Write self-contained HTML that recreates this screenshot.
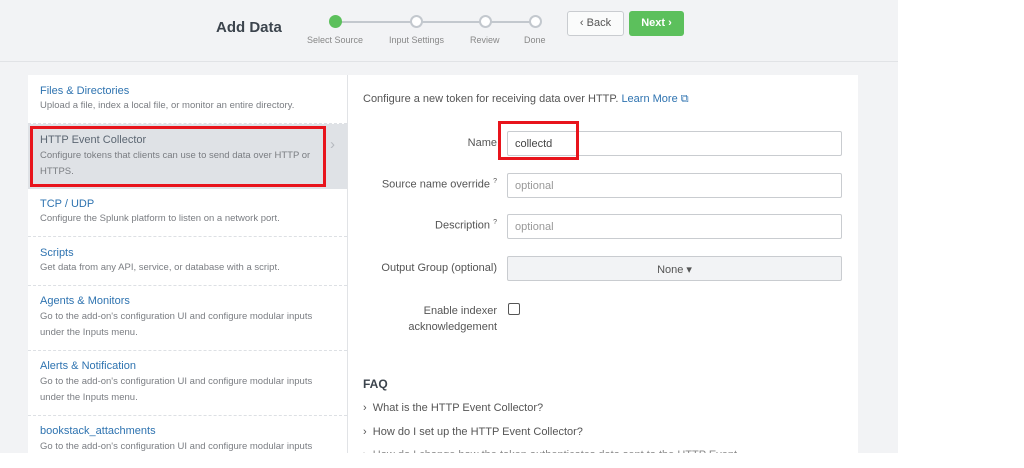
<!DOCTYPE html><html><head><style>
*{margin:0;padding:0;box-sizing:border-box}
body{width:1024px;height:468px;background:#fff;font-family:"Liberation Sans",sans-serif;position:relative;overflow:hidden}
.a{position:absolute;white-space:nowrap}
.t{color:#2e73b0;font-size:11px}
.d{color:#7a7d82;font-size:9.5px;line-height:16px}
.sep{position:absolute;left:28px;width:319px;border-top:1px dashed #dde0e4}
.lbl{position:absolute;right:527px;color:#555;font-size:11px;text-align:right}
.inp{position:absolute;left:507px;width:335px;height:25px;border:1px solid #c9ccd0;border-radius:2px;background:#fff;font-size:11px;color:#999;padding:6px 7px}
.stp{position:absolute;top:15px;width:13px;height:13px;border-radius:50%;border:2px solid #c3c8ce;background:#fff}
.sl{position:absolute;top:35px;font-size:9px;color:#888}
</style></head><body>
<div class="a" style="left:0;top:0;width:898px;height:453px;background:#f2f3f5"></div>
<div class="a" style="left:0;top:61px;width:898px;border-top:1px solid #e1e3e6"></div>
<div class="a" style="left:216px;top:19px;font-size:15px;color:#3c444d;font-weight:bold">Add Data</div>
<div class="a" style="left:336px;top:21px;width:200px;height:2px;background:#c3c8ce"></div>
<div class="stp" style="left:329px;background:#5cc05c;border-color:#5cc05c"></div>
<div class="stp" style="left:410px"></div>
<div class="stp" style="left:479px"></div>
<div class="stp" style="left:529px"></div>
<div class="sl" style="left:307px">Select Source</div>
<div class="sl" style="left:389px">Input Settings</div>
<div class="sl" style="left:470px">Review</div>
<div class="sl" style="left:524px">Done</div>
<div class="a" style="left:567px;top:11px;width:57px;height:25px;border:1px solid #c9ccd0;border-radius:3px;background:#fafbfb;font-size:11px;color:#555;text-align:center;line-height:23px">‹ Back</div>
<div class="a" style="left:629px;top:11px;width:55px;height:25px;border-radius:3px;background:#5cc05c;font-size:11px;color:#fff;font-weight:bold;text-align:center;line-height:25px">Next ›</div>
<div class="a" style="left:28px;top:75px;width:830px;height:378px;background:#fff"></div>
<div class="a" style="left:347px;top:75px;height:378px;border-left:1px solid #e1e3e6"></div>
<div class="a" style="left:28px;top:124px;width:319px;height:65px;background:#dfe2e6"></div>
<div class="a" style="left:330px;top:136px;color:#b5b9bf;font-size:15px">›</div>
<div class="a t" style="left:40px;top:85px">Files &amp; Directories</div>
<div class="a d" style="left:40px;top:98px">Upload a file, index a local file, or monitor an entire directory.</div>
<div class="sep" style="top:123px"></div>
<div class="a t" style="left:40px;top:134px;color:#5c6773">HTTP Event Collector</div>
<div class="a d" style="left:40px;top:148px">Configure tokens that clients can use to send data over HTTP or<br>HTTPS.</div>
<div class="a t" style="left:40px;top:198px">TCP / UDP</div>
<div class="a d" style="left:40px;top:211px">Configure the Splunk platform to listen on a network port.</div>
<div class="sep" style="top:236px"></div>
<div class="a t" style="left:40px;top:247px">Scripts</div>
<div class="a d" style="left:40px;top:260px">Get data from any API, service, or database with a script.</div>
<div class="sep" style="top:285px"></div>
<div class="a t" style="left:40px;top:295px">Agents &amp; Monitors</div>
<div class="a d" style="left:40px;top:309px">Go to the add-on's configuration UI and configure modular inputs<br>under the Inputs menu.</div>
<div class="sep" style="top:350px"></div>
<div class="a t" style="left:40px;top:360px">Alerts &amp; Notification</div>
<div class="a d" style="left:40px;top:374px">Go to the add-on's configuration UI and configure modular inputs<br>under the Inputs menu.</div>
<div class="sep" style="top:415px"></div>
<div class="a t" style="left:40px;top:425px">bookstack_attachments</div>
<div class="a d" style="left:40px;top:439px">Go to the add-on's configuration UI and configure modular inputs</div>
<div class="a" style="left:30px;top:126px;width:296px;height:61px;border:3px solid #e8141c"></div>
<div class="a" style="left:363px;top:93px;font-size:11px;color:#555">Configure a new token for receiving data over HTTP. <span style="color:#2e73b0">Learn More ⧉</span></div>
<div class="lbl" style="top:137px">Name</div>
<div class="inp" style="top:131px;color:#444">collectd</div>
<div class="lbl" style="top:178px">Source name override <sup style="font-size:7px">?</sup></div>
<div class="inp" style="top:173px">optional</div>
<div class="lbl" style="top:219px">Description <sup style="font-size:7px">?</sup></div>
<div class="inp" style="top:214px">optional</div>
<div class="lbl" style="top:262px">Output Group (optional)</div>
<div class="inp" style="top:256px;background:#f2f3f5;color:#555;text-align:center">None ▾</div>
<div class="lbl" style="top:303px;line-height:16px">Enable indexer<br>acknowledgement</div>
<div class="a" style="left:508px;top:303px;width:12px;height:12px;border:1px solid #555;border-radius:2px"></div>
<div class="a" style="left:498px;top:121px;width:81px;height:39px;border:3px solid #e8141c"></div>
<div class="a" style="left:363px;top:377px;font-size:12px;font-weight:bold;color:#3c444d">FAQ</div>
<div class="a" style="left:363px;top:402px;font-size:11px;color:#555">›&nbsp; What is the HTTP Event Collector?</div>
<div class="a" style="left:363px;top:426px;font-size:11px;color:#555">›&nbsp; How do I set up the HTTP Event Collector?</div>
<div class="a" style="left:363px;top:449px;font-size:11px;color:#888;height:4px;overflow:hidden">›&nbsp; How do I change how the token authenticates data sent to the HTTP Event</div>
</body></html>
